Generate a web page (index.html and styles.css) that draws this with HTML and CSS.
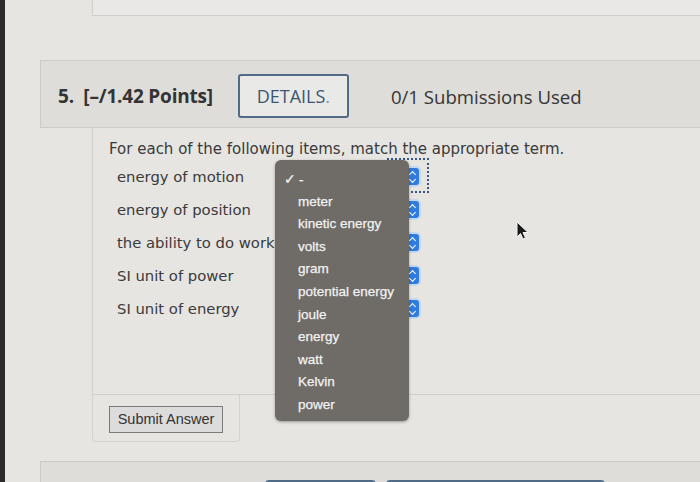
FILE: index.html
```html
<!DOCTYPE html>
<html>
<head>
<meta charset="utf-8">
<link rel="stylesheet" href="styles.css">
</head>
<body>
<div class="page">
  <div class="edge"></div>
  <div class="main">
    <div class="prev-box"></div>
    <div class="qhead">
      <span class="qnum">5.&nbsp; [–/1.42 Points]</span>
      <span class="details">DETAILS<span class="dot">.</span></span>
      <span class="subs">0/1 Submissions Used</span>
    </div>
    <div class="qbody">
      <p class="prompt">For each of the following items, match the appropriate term.</p>
      <div class="rows">
        <div class="row"><span class="lbl">energy of motion</span><span class="sel focus"><span class="cap"></span></span></div>
        <div class="row"><span class="lbl">energy of position</span><span class="sel"><span class="cap"></span></span></div>
        <div class="row"><span class="lbl">the ability to do work</span><span class="sel"><span class="cap"></span></span></div>
        <div class="row"><span class="lbl">SI unit of power</span><span class="sel"><span class="cap"></span></span></div>
        <div class="row"><span class="lbl">SI unit of energy</span><span class="sel"><span class="cap"></span></span></div>
      </div>
    </div>
    <div class="submit-box"><span class="submit">Submit Answer</span></div>
    <div class="qhead next">
      <span class="nbtn small"></span>
      <span class="nbtn wide"></span>
    </div>
  </div>
</div>
<ul class="menu">
  <li class="chk"><span class="tick">✓</span>-</li>
  <li>meter</li>
  <li>kinetic energy</li>
  <li>volts</li>
  <li>gram</li>
  <li>potential energy</li>
  <li>joule</li>
  <li>energy</li>
  <li>watt</li>
  <li>Kelvin</li>
  <li>power</li>
</ul>
<svg class="cursor" width="14" height="20" viewBox="0 0 14 20"><path d="M1 1 L1 16 L4.5 12.5 L7 18 L9.5 17 L7 11.5 L12 11.5 Z" fill="#1a1a1a" stroke="#f4f4f4" stroke-width="1"/></svg>
</body>
</html>
```
FILE: styles.css
```css
html, body { margin: 0; padding: 0; }
body {
  width: 700px; height: 482px; overflow: hidden; position: relative;
  background: #e6e5e2;
  font-family: "Open Sans", "DejaVu Sans", sans-serif;
  color: #333;
}
.page { display: flex; height: 482px; }
.edge { width: 5px; background: #2b2b2b; flex: none; }
.main { flex: 1; display: flex; flex-direction: column; }
.main > * { flex-shrink: 0; }
.prev-box {
  margin-left: 87px; height: 16px; box-sizing: border-box;
  border-left: 1px solid #cfcfcd; border-bottom: 1px solid #cfcfcd;
  background: #e9e8e6;
}
.qhead {
  margin-top: 44px; margin-left: 35px; height: 68px; box-sizing: border-box;
  background: #deddda; border: 1px solid #cbcbc8; border-right: none;
  display: flex; align-items: center; padding: 4px 0 0 17px;
}
.qnum { font-weight: 700; font-size: 19px; color: #333; letter-spacing: -0.2px; }
.details {
  margin-left: 25px; width: 111px; height: 44px; box-sizing: border-box;
  border: 2px solid #4f6b86; border-radius: 3px;
  display: flex; align-items: center; justify-content: center;
  font-size: 18px; color: #3c5670; background: #e9e9e7;
}
.dot { color: #7d95ad; }
.subs { margin-left: 42px; font-size: 18.6px; color: #353535; }
.qbody {
  margin-left: 87px; height: 267px; box-sizing: border-box;
  border-left: 1px solid #cfcfcd; border-bottom: 1px solid #cfcfcd;
  padding: 10px 0 0 16px;
  font-family: "DejaVu Sans", Verdana, sans-serif; color: #3a3a3a;
}
.prompt { margin: 0; font-size: 15px; line-height: 22px; }
.rows { display: flex; flex-direction: column; padding-left: 8px; margin-top: 0; }
.row { display: flex; align-items: center; height: 33px; }
.lbl { width: 158px; font-size: 14.8px; white-space: nowrap; }
.sel {
  position: relative; width: 145px; height: 20px; background: #f6f6f6;
  border-radius: 4px; display: flex; justify-content: flex-end; align-items: center;
}
.cap {
  width: 14px; height: 17px; background: #2f7be0; border-radius: 3px; margin-right: 1px;
  box-shadow: 0 0 0 2px #c3d8f2;
  position: relative;
}
.cap::before, .cap::after {
  content: ""; position: absolute; left: 4.5px; width: 4px; height: 4px;
  border-left: 1.6px solid #fff; border-top: 1.6px solid #fff;
}
.cap::before { top: 3.5px; transform: rotate(45deg); }
.cap::after { bottom: 3.5px; transform: rotate(225deg); }
.focus::after {
  content: ""; position: absolute; right: -9px; top: -9px; width: 40px; height: 31px;
  border: 2px dotted #3a5587; border-left: none;
}
.submit-box {
  margin-left: 87px; width: 148px; height: 47px; box-sizing: border-box;
  border: 1px solid #d2d2d0; border-top: none; border-radius: 0 0 4px 4px;
  padding: 11px 0 0 16px;
}
.submit {
  display: inline-block; width: 114px; height: 27px; box-sizing: border-box;
  border: 1px solid #7a7a7a; background: #dcdcdc;
  font-family: "Liberation Sans", Arial, sans-serif; font-size: 14.5px; color: #333;
  text-align: center; line-height: 25px;
}
.qhead.next {
  margin-top: 19px; height: 30px; align-items: flex-end; padding: 0 0 0 224px;
}
.nbtn {
  height: 10px; border: 2px solid #4f6b86; border-bottom: none; border-radius: 4px 4px 0 0;
  box-sizing: border-box; background: #e9e9e7;
}
.nbtn.small { width: 111px; }
.nbtn.wide { width: 219px; margin-left: 10px; }
.menu {
  position: absolute; left: 275px; top: 160px; width: 134px; height: 261px;
  margin: 0; padding: 8px 0 0 0; box-sizing: border-box; list-style: none;
  background: #6f6c68; border-radius: 6px;
  box-shadow: 0 1px 3px rgba(0,0,0,0.35);
  font-family: "Liberation Sans", Arial, sans-serif; font-size: 13.5px; color: #f2f2f2;
  -webkit-text-stroke: 0.25px #f2f2f2;
}
.menu li { height: 22.6px; line-height: 22.6px; padding-left: 23px; white-space: nowrap; }
.menu li.chk { padding-left: 9px; }
.tick { display: inline-block; width: 15px; font-size: 14px; }
.cursor { position: absolute; left: 516px; top: 221px; }
```
